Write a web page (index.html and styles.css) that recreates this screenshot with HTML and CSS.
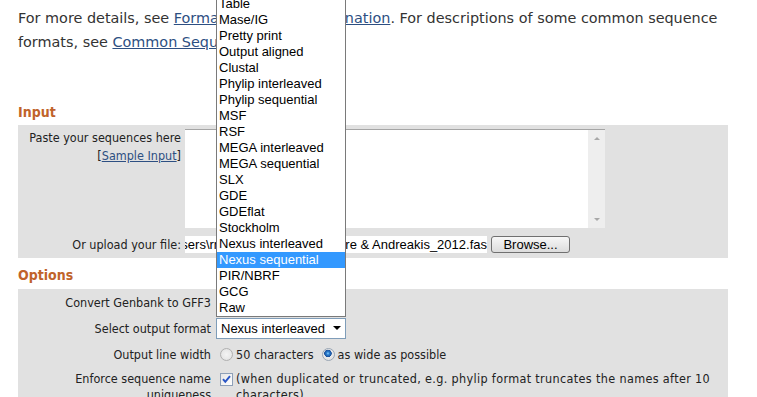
FILE: index.html
```html
<!DOCTYPE html>
<html>
<head>
<meta charset="utf-8">
<link rel="stylesheet" href="styles.css">
</head>
<body>
<div class="page">
  <p class="intro">For more details, see <a href="#">Format Converter Explanation</a>. For descriptions of some common sequence formats, see <a href="#">Common Sequence Formats</a>.</p>

  <h2 class="section-title">Input</h2>
  <div class="panel input-panel">
    <div class="label paste-label">Paste your sequences here<br>[<a href="#">Sample Input</a>]</div>
    <div class="textarea">
      <div class="scrollbar"><span class="arrow-up"></span><span class="arrow-down"></span></div>
    </div>
    <div class="label file-label">Or upload your file:</div>
    <div class="file-row">
      <div class="file-field"><span class="file-path">C:\Users\rmoore\Desktop\fa\Moore &amp; Andreakis_2012.fas</span></div>
      <button class="browse" type="button">Browse...</button>
    </div>
  </div>

  <h2 class="section-title options-title">Options</h2>
  <div class="panel options-panel">
    <div class="opt-row r1">
      <div class="label">Convert Genbank to GFF3</div>
      <div class="control"><span class="checkbox"></span></div>
    </div>
    <div class="opt-row r2">
      <div class="label">Select output format</div>
      <div class="control">
        <div class="select-wrap">
          <div class="select"><span>Nexus interleaved</span><span class="select-arrow"></span></div>
          <ul class="listbox">
            <li>Table</li>
            <li>Mase/IG</li>
            <li>Pretty print</li>
            <li>Output aligned</li>
            <li>Clustal</li>
            <li>Phylip interleaved</li>
            <li>Phylip sequential</li>
            <li>MSF</li>
            <li>RSF</li>
            <li>MEGA interleaved</li>
            <li>MEGA sequential</li>
            <li>SLX</li>
            <li>GDE</li>
            <li>GDEflat</li>
            <li>Stockholm</li>
            <li>Nexus interleaved</li>
            <li class="selected">Nexus sequential</li>
            <li>PIR/NBRF</li>
            <li>GCG</li>
            <li>Raw</li>
          </ul>
        </div>
      </div>
    </div>
    <div class="opt-row r3">
      <div class="label">Output line width</div>
      <div class="control radio-group">
        <span class="radio"></span><span class="radio-text">50 characters</span>
        <span class="radio checked"></span><span class="radio-text">as wide as possible</span>
      </div>
    </div>
    <div class="opt-row r4">
      <div class="label">Enforce sequence name uniqueness</div>
      <div class="control check-row">
        <span class="checkbox checked"><svg width="13" height="13" viewBox="0 0 13 13"><path d="M3 6.2 L5.3 8.8 L10 3.2" fill="none" stroke="#2a56c6" stroke-width="2"/></svg></span>
        <span class="check-text">(when duplicated or truncated, e.g. phylip format truncates the names after 10 characters)</span>
      </div>
    </div>
  </div>
</div>
</body>
</html>
```

FILE: styles.css
```css
body {
  margin: 0;
  background: #fff;
  font-family: "DejaVu Sans", sans-serif;
  color: #333;
}

.page {
  width: 710px;
  margin-left: 18px;
  padding-top: 6px;
}

.intro {
  margin: 0;
  font-size: 14.4px;
  line-height: 24px;
  color: #333;
}

.intro a,
.panel a {
  color: #2d4f82;
}

.section-title {
  margin: 49px 0 4px;
  font: bold 14px/18px "DejaVu Sans Condensed", "DejaVu Sans", sans-serif;
  color: #c0632a;
}

.section-title.options-title {
  margin-top: 8px;
  margin-bottom: 5px;
}

.panel {
  background: #e1e1e1;
  font-family: "DejaVu Sans Condensed", "DejaVu Sans", sans-serif;
  font-size: 12.5px;
  color: #222;
}

.label {
  text-align: right;
}

/* Input panel */
.input-panel {
  display: grid;
  grid-template-columns: 163px 1fr;
  column-gap: 4px;
  row-gap: 8px;
  padding: 4px 0 5px;
}

.paste-label {
  line-height: 18px;
}

.file-label {
  line-height: 17px;
}

.textarea {
  width: 420px;
  height: 99px;
  box-sizing: border-box;
  background: #fff;
  border-top: 1px solid #a5a5a5;
  display: flex;
  justify-content: flex-end;
}

.scrollbar {
  width: 17px;
  background: #eeeeee;
  display: flex;
  flex-direction: column;
  justify-content: space-between;
  align-items: center;
  padding: 7px 0 7px;
  box-sizing: border-box;
}

.arrow-up {
  width: 0;
  height: 0;
  border-left: 3px solid transparent;
  border-right: 3px solid transparent;
  border-bottom: 3px solid #a8a8a8;
}

.arrow-down {
  width: 0;
  height: 0;
  border-left: 3px solid transparent;
  border-right: 3px solid transparent;
  border-top: 3px solid #a8a8a8;
}

.file-row {
  display: flex;
  align-items: center;
  gap: 4px;
  height: 17px;
}

.file-field {
  width: 302px;
  height: 17px;
  background: #fff;
  font: 13px/17px "Liberation Sans", Arial, sans-serif;
  color: #000;
  overflow: hidden;
  white-space: nowrap;
  display: flex;
  justify-content: flex-end;
}

.file-path {
  flex: none;
}

.browse {
  width: 79px;
  height: 17px;
  box-sizing: border-box;
  border: 1px solid #707070;
  border-radius: 3px;
  background: linear-gradient(#f7f7f7, #dcdcdc);
  font: 13px/14px "Liberation Sans", Arial, sans-serif;
  padding: 0;
  color: #000;
}

/* Options panel */
.options-panel {
  padding-right: 8px;
}

.opt-row {
  display: grid;
  grid-template-columns: 193px 1fr;
  column-gap: 5px;
  align-items: center;
}

.r1, .r2 { height: 26px; }
.r3 { height: 27px; }

.r4 {
  align-items: start;
  padding-top: 3px;
  line-height: 16px;
  padding-bottom: 10px;
}

.control {
  display: flex;
  align-items: center;
}

.r1 .control {
  padding-left: 4px;
}

.select-wrap {
  position: relative;
  width: 130px;
  height: 21px;
}

.select {
  box-sizing: border-box;
  width: 130px;
  height: 21px;
  border: 1px solid #7f9db9;
  background: #fff;
  font: 13px/19px "Liberation Sans", Arial, sans-serif;
  padding-left: 4px;
  padding-right: 4px;
  color: #000;
  display: flex;
  justify-content: space-between;
  align-items: center;
}

.select-arrow {
  width: 0;
  height: 0;
  border-left: 4px solid transparent;
  border-right: 4px solid transparent;
  border-top: 4px solid #000;
}

.listbox {
  position: absolute;
  left: 0;
  bottom: calc(100% + 1px);
  z-index: 10;
  width: 130px;
  box-sizing: border-box;
  border: 1px solid #7a7a7a;
  background: #fff;
  margin: 0;
  padding: 0;
  list-style: none;
  font: 13px/16px "Liberation Sans", Arial, sans-serif;
  color: #000;
}

.listbox li {
  padding-left: 2px;
  height: 16px;
  white-space: nowrap;
}

.listbox li.selected {
  background: #3399ff;
  color: #fff;
}

.radio-group {
  padding-left: 4px;
}

.radio {
  width: 13px;
  height: 13px;
  box-sizing: border-box;
  border-radius: 50%;
  border: 1px solid #b0b0b0;
  background: radial-gradient(circle at 50% 50%, #f4f4f4 0, #e8e8e8 60%, #d6d6d6 100%);
  margin-right: 3px;
  flex: none;
}

.radio.checked {
  border-color: #9aa6b4;
  background: radial-gradient(circle at 45% 40%, #8fd0ff 0, #2a7fd0 1.5px, #1b4f9a 3.5px, #e9e9e9 4px, #dcdcdc 100%);
  margin-left: 8px;
}

.check-row {
  align-items: flex-start;
  padding-left: 4px;
}

.check-text {
  letter-spacing: 0.35px;
}

.checkbox {
  width: 13px;
  height: 13px;
  box-sizing: border-box;
  border: 1px solid #8ea0b8;
  background: linear-gradient(135deg, #e6e6e6, #ffffff);
  flex: none;
  display: block;
}

.check-row .checkbox {
  margin-top: 2px;
  margin-right: 3px;
  position: relative;
}

.checkbox svg {
  display: block;
  margin: -1px;
}
```
